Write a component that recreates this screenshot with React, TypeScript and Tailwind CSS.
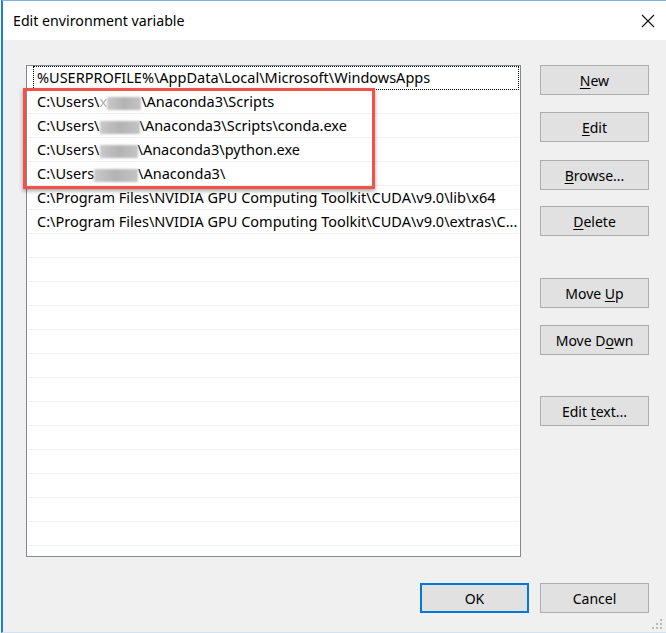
import React from "react";

const font = { fontFamily: '"Segoe UI", "Noto Sans", sans-serif' };

function Blur({ w = 40 }: { w?: number }) {
  return (
    <span
      className="inline-block h-[13px] align-middle bg-gradient-to-r from-[#c9c9c9] via-[#b3b3b3] to-[#c4c4c4] blur-[1px]"
      style={{ width: w }}
    />
  );
}

function Btn({
  children,
  primary = false,
}: {
  children: React.ReactNode;
  primary?: boolean;
}) {
  return (
    <div
      className={
        "w-[109px] h-[30px] flex items-center justify-center bg-[#e1e1e1] text-[14px] text-black " +
        (primary ? "border-2 border-[#0078d7]" : "border border-[#adadad]")
      }
    >
      <span className="whitespace-pre">{children}</span>
    </div>
  );
}

function U({ children }: { children: React.ReactNode }) {
  return <span className="underline underline-offset-2">{children}</span>;
}

export default function App() {
  const rows: React.ReactNode[] = [
    "%USERPROFILE%\\AppData\\Local\\Microsoft\\WindowsApps",
    <>
      C:\Users\<span className="text-[#b0b0b0] blur-[0.5px]">x</span>
      <Blur w={34} />\Anaconda3\Scripts
    </>,
    <>
      C:\Users\<Blur w={40} />\Anaconda3\Scripts\conda.exe
    </>,
    <>
      C:\Users\<Blur w={38} />\Anaconda3\python.exe
    </>,
    <>
      C:\Users<Blur w={44} />\Anaconda3\
    </>,
    "C:\\Program Files\\NVIDIA GPU Computing Toolkit\\CUDA\\v9.0\\lib\\x64",
    "C:\\Program Files\\NVIDIA GPU Computing Toolkit\\CUDA\\v9.0\\extras\\C...",
  ];
  while (rows.length < 20) rows.push("");

  return (
    <div className="w-[666px] h-[633px] bg-white pl-px" style={font}>
      <div className="relative w-full h-full flex flex-col border-l-2 border-[#1b80d6] border-t border-t-[#7fb2e3] border-b border-b-[#d3e2f1]">
        {/* title bar */}
        <div className="h-[39px] bg-white flex items-center justify-between pl-[10px] pr-[10px]">
          <span className="text-[14.2px] text-black">Edit environment variable</span>
          <svg width="14" height="14" viewBox="0 0 14 14" className="mr-[1px]">
            <path d="M1 1 L13 13 M13 1 L1 13" stroke="#111" strokeWidth="1.1" />
          </svg>
        </div>
        {/* body */}
        <div className="flex-1 bg-[#f0f0f0] flex flex-col pl-[23px] pr-[17px] pt-[25px]">
          <div className="flex gap-[19px]">
            {/* list */}
            <div className="relative w-[495px] h-[492px] bg-white border border-[#828790] px-px">
              {rows.map((r, i) => (
                <div
                  key={i}
                  className="relative h-[24px] border-b border-[#f0f0f0] flex items-center pl-[9px] text-[14.5px] text-black whitespace-nowrap"
                >
                  {i === 0 && (
                    <div className="absolute left-[5px] right-0 top-0 bottom-[-1px] border border-dotted border-black" />
                  )}
                  <span className="relative pt-px">{r}</span>
                </div>
              ))}
              {/* red highlight */}
              <div className="absolute left-[-4px] top-[22px] w-[352px] h-[101px] border-[3px] border-[#f2524a] shadow-[0_2px_4px_rgba(0,0,0,0.35)]" />
            </div>
            {/* buttons */}
            <div className="flex flex-col">
              <Btn>
                <U>N</U>ew
              </Btn>
              <div className="mt-[17px]">
                <Btn>
                  <U>E</U>dit
                </Btn>
              </div>
              <div className="mt-[18px]">
                <Btn>
                  <U>B</U>rowse...
                </Btn>
              </div>
              <div className="mt-[16px]">
                <Btn>
                  <U>D</U>elete
                </Btn>
              </div>
              <div className="mt-[42px]">
                <Btn>
                  {"Move "}
                  <U>U</U>p
                </Btn>
              </div>
              <div className="mt-[17px]">
                <Btn>
                  Move D<U>o</U>wn
                </Btn>
              </div>
              <div className="mt-[41px]">
                <Btn>
                  {"Edit "}
                  <U>t</U>ext...
                </Btn>
              </div>
            </div>
          </div>
          <div className="flex justify-end gap-[11px] mt-[26px]">
            <Btn primary>OK</Btn>
            <Btn>Cancel</Btn>
          </div>
        </div>
        {/* resize grip */}
        <svg className="absolute right-[3px] bottom-[2px]" width="12" height="12" viewBox="0 0 12 12">
          <g fill="#b9b9b9">
            <rect x="9" y="1" width="2" height="2" />
            <rect x="5" y="5" width="2" height="2" />
            <rect x="9" y="5" width="2" height="2" />
            <rect x="1" y="9" width="2" height="2" />
            <rect x="5" y="9" width="2" height="2" />
            <rect x="9" y="9" width="2" height="2" />
          </g>
        </svg>
      </div>
    </div>
  );
}
